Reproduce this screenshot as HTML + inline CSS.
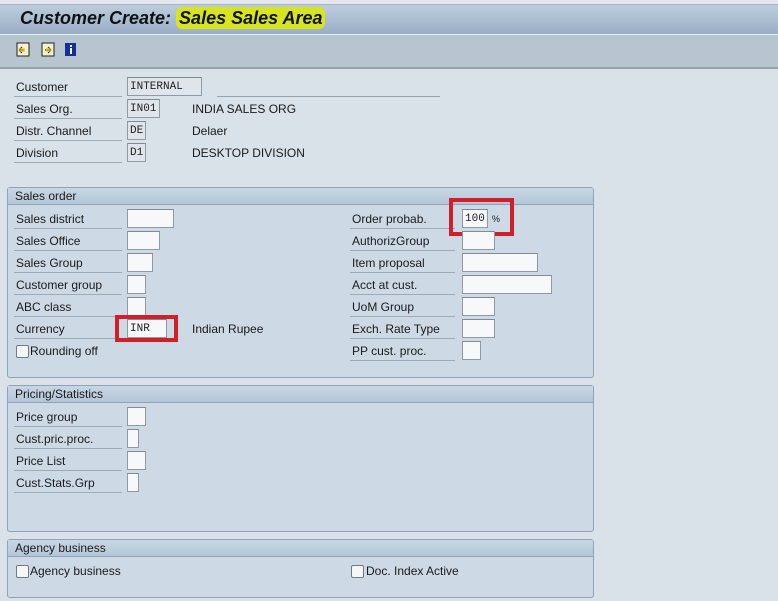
<!DOCTYPE html>
<html><head><style>
*{margin:0;padding:0;box-sizing:border-box}
body{width:778px;height:601px;background:#d9e1e9;font-family:"Liberation Sans",Tahoma,sans-serif;font-size:12px;color:#1a1a1a;position:relative;overflow:hidden}
.a{position:absolute}
.top{left:0;top:0;width:778px;height:5px;background:#e4e8ee;border-bottom:1px solid #aab4c0}
.title{left:0;top:5px;width:778px;height:30px;background:linear-gradient(#bccddd,#99adc6);border-bottom:1px solid #e6eef6}
.title > span{position:absolute;left:20px;top:3px;font-weight:bold;font-style:italic;font-size:18px;color:#111;white-space:nowrap}
.hl{background:#d8e41e;border-radius:6px;padding:1px 3px}
.tb{left:0;top:35px;width:778px;height:34px;background:#b7c5cf;border-bottom:2px solid #98a2ac}
.lbl{position:absolute;height:20px;line-height:21px;padding-left:2px;border-bottom:1px solid #a0aab6}
.f{position:absolute;height:19px;background:#f6f8fa;border:1px solid #8e9aa6;border-top-color:#7e8a96;font-family:"Liberation Mono",monospace;font-size:11px;line-height:19px;padding-left:2px;color:#222}
.ro{background:#dfe5eb}
.t{position:absolute;line-height:21px}
.grp{position:absolute;left:7px;width:587px;border:1px solid #8fa2b7;background:#cdd9e5;border-radius:3px}
.gh{height:17px;line-height:16px;padding-left:7px;background:linear-gradient(#c9d7e4,#b4c6d8);border-bottom:1px solid #8fa2b7}
.cb{position:absolute;width:13px;height:13px;border:1px solid #6f7b87;background:#f4f6f8;border-radius:2px}
.red{position:absolute;border:4px solid #d11f2a}
</style></head><body>
<div class="a top"></div>
<div class="a title"><span>Customer Create: <span class="hl">Sales Sales Area</span></span></div>
<div class="a tb">
<svg class="a" style="left:16px;top:7px" width="60" height="16">
<rect x="1" y="1" width="12" height="13" fill="#f4f0d0" stroke="#222"/><path d="M3 8h5M3 8l3-3M3 8l3 3" stroke="#222" fill="none"/><rect x="3" y="6" width="6" height="4" fill="#e8c020" opacity=".6"/>
<rect x="26" y="1" width="12" height="13" fill="#f4f0d0" stroke="#222"/><path d="M29 8h6M35 8l-3-3M35 8l-3 3" stroke="#222" fill="none"/><rect x="30" y="6" width="5" height="4" fill="#e8c020" opacity=".6"/>
<rect x="49" y="1" width="12" height="13" fill="#1030a0"/><rect x="54" y="3" width="2" height="2" fill="#fff"/><rect x="54" y="6" width="2" height="6" fill="#fff"/>
</svg>
</div>

<div class="lbl" style="left:14px;top:77px;width:108px">Customer</div>
<div class="f ro" style="left:127px;top:77px;width:75px">INTERNAL</div>
<div class="a" style="left:217px;top:96px;width:223px;border-bottom:1px solid #98a2ac"></div>
<div class="lbl" style="left:14px;top:99px;width:108px">Sales Org.</div>
<div class="f ro" style="left:127px;top:99px;width:33px">IN01</div>
<div class="t" style="left:192px;top:99px">INDIA SALES ORG</div>
<div class="lbl" style="left:14px;top:121px;width:108px">Distr. Channel</div>
<div class="f ro" style="left:127px;top:121px;width:19px">DE</div>
<div class="t" style="left:192px;top:121px">Delaer</div>
<div class="lbl" style="left:14px;top:143px;width:108px">Division</div>
<div class="f ro" style="left:127px;top:143px;width:19px">D1</div>
<div class="t" style="left:192px;top:143px">DESKTOP DIVISION</div>

<div class="grp" style="top:187px;height:191px"><div class="gh">Sales order</div></div>
<div class="lbl" style="left:14px;top:209px;width:108px">Sales district</div><div class="f" style="left:127px;top:209px;width:47px"></div>
<div class="lbl" style="left:14px;top:231px;width:108px">Sales Office</div><div class="f" style="left:127px;top:231px;width:33px"></div>
<div class="lbl" style="left:14px;top:253px;width:108px">Sales Group</div><div class="f" style="left:127px;top:253px;width:26px"></div>
<div class="lbl" style="left:14px;top:275px;width:108px">Customer group</div><div class="f" style="left:127px;top:275px;width:19px"></div>
<div class="lbl" style="left:14px;top:297px;width:108px">ABC class</div><div class="f" style="left:127px;top:297px;width:19px"></div>
<div class="lbl" style="left:14px;top:319px;width:108px">Currency</div><div class="f" style="left:127px;top:319px;width:40px">INR</div>
<div class="red" style="left:115px;top:315px;width:63px;height:27px"></div>
<div class="t" style="left:192px;top:319px">Indian Rupee</div>
<div class="cb" style="left:16px;top:345px"></div><div class="t" style="left:30px;top:341px">Rounding off</div>

<div class="lbl" style="left:350px;top:209px;width:105px">Order probab.</div><div class="f" style="left:462px;top:209px;width:26px">100</div><div class="t" style="left:492px;top:209px;font-size:9px">%</div>
<div class="red" style="left:449px;top:198px;width:65px;height:38px"></div>
<div class="lbl" style="left:350px;top:231px;width:105px">AuthorizGroup</div><div class="f" style="left:462px;top:231px;width:33px"></div>
<div class="lbl" style="left:350px;top:253px;width:105px">Item proposal</div><div class="f" style="left:462px;top:253px;width:76px"></div>
<div class="lbl" style="left:350px;top:275px;width:105px">Acct at cust.</div><div class="f" style="left:462px;top:275px;width:90px"></div>
<div class="lbl" style="left:350px;top:297px;width:105px">UoM Group</div><div class="f" style="left:462px;top:297px;width:33px"></div>
<div class="lbl" style="left:350px;top:319px;width:105px">Exch. Rate Type</div><div class="f" style="left:462px;top:319px;width:33px"></div>
<div class="lbl" style="left:350px;top:341px;width:105px">PP cust. proc.</div><div class="f" style="left:462px;top:341px;width:19px"></div>

<div class="grp" style="top:385px;height:147px"><div class="gh">Pricing/Statistics</div></div>
<div class="lbl" style="left:14px;top:407px;width:108px">Price group</div><div class="f" style="left:127px;top:407px;width:19px"></div>
<div class="lbl" style="left:14px;top:429px;width:108px">Cust.pric.proc.</div><div class="f" style="left:127px;top:429px;width:12px"></div>
<div class="lbl" style="left:14px;top:451px;width:108px">Price List</div><div class="f" style="left:127px;top:451px;width:19px"></div>
<div class="lbl" style="left:14px;top:473px;width:108px">Cust.Stats.Grp</div><div class="f" style="left:127px;top:473px;width:12px"></div>

<div class="grp" style="top:539px;height:59px"><div class="gh">Agency business</div></div>
<div class="cb" style="left:16px;top:565px"></div><div class="t" style="left:30px;top:561px">Agency business</div>
<div class="cb" style="left:351px;top:565px"></div><div class="t" style="left:366px;top:561px">Doc. Index Active</div>
</body></html>
